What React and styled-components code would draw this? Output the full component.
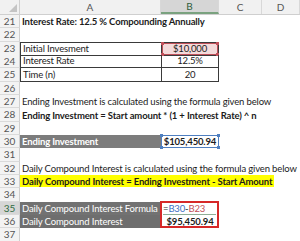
import React from "react";
import styled, { createGlobalStyle } from "styled-components";

const Global = createGlobalStyle`
  html, body { margin: 0; padding: 0; background: #fff; }
`;

const COLS = "20px 141px 58px 43px 38px";
const ROW_H = 13.33;

const Sheet = styled.div`
  width: 300px;
  height: 241px;
  overflow: hidden;
  background: #fff;
  font-family: Lato, "Liberation Sans", sans-serif;
  font-size: 9.5px;
  letter-spacing: -0.15px;
  color: #1c1c1c;
`;

const HeadRow = styled.div`
  display: grid;
  grid-template-columns: ${COLS};
  height: 15px;
  background: #f1f1f1;
  border-bottom: 1px solid #cfcfcf;
  box-sizing: border-box;
`;

const Corner = styled.div`
  position: relative;
  border-right: 1px solid #cfcfcf;
  &::after {
    content: "";
    position: absolute;
    right: 2px;
    bottom: 2px;
    border-style: solid;
    border-width: 0 0 8px 8px;
    border-color: transparent transparent #c4c4c4 transparent;
  }
`;

const ColHead = styled.div`
  display: flex;
  align-items: center;
  justify-content: center;
  color: ${(p) => (p.$active ? "#2f5d3a" : "#555")};
  background: ${(p) => (p.$active ? "#d6d6d6" : "transparent")};
  border-right: 1px solid #d8d8d8;
  border-bottom: ${(p) => (p.$active ? "2px solid #7aa27f" : "none")};
  box-sizing: border-box;
  font-size: 10px;
  letter-spacing: 0;
`;

const Row = styled.div`
  display: grid;
  grid-template-columns: ${COLS};
  height: ${ROW_H}px;
`;

const RowNum = styled.div`
  display: flex;
  align-items: center;
  justify-content: center;
  background: ${(p) => (p.$active ? "#d6d6d6" : "#f3f3f3")};
  color: ${(p) => (p.$active ? "#2f6b40" : "#555")};
  border-right: 1px solid #cfcfcf;
  border-bottom: 1px solid #dadada;
  box-sizing: border-box;
  font-size: 10px;
  letter-spacing: 0;
`;

const Cell = styled.div`
  position: relative;
  display: flex;
  align-items: flex-end;
  justify-content: ${(p) => (p.$center ? "center" : "flex-start")};
  padding: 0 2px 1px 2px;
  box-sizing: border-box;
  white-space: nowrap;
  overflow: ${(p) => (p.$clip ? "hidden" : "visible")};
  background: ${(p) => p.$fill || "transparent"};
  color: ${(p) => p.$color || "inherit"};
  font-weight: ${(p) => (p.$bold ? 700 : 400)};
  border-left: ${(p) => (p.$grid ? "1px solid #3a3a3a" : "none")};
  border-bottom: ${(p) => (p.$grid ? "1px solid #3a3a3a" : "none")};
  border-top: ${(p) => (p.$gridTop ? "1px solid #3a3a3a" : "none")};
  border-right: ${(p) => (p.$gridRight ? "1px solid #3a3a3a" : "none")};
`;

const Marked = styled.div`
  position: absolute;
  inset: 0;
  border: 1px solid ${(p) => p.$c};
  pointer-events: none;
  & > i {
    position: absolute;
    width: 3px;
    height: 3px;
    background: ${(p) => p.$c};
  }
  & > i:nth-child(1) { left: -2px; top: -2px; }
  & > i:nth-child(2) { right: -2px; top: -2px; }
  & > i:nth-child(3) { left: -2px; bottom: -2px; }
  & > i:nth-child(4) { right: -2px; bottom: -2px; }
`;

const Highlight = styled.span`
  display: inline-block;
  background: #ffff00;
  margin-left: -2px;
  padding: 1px 2px 0 2px;
  line-height: 11px;
`;

const RedBox = styled.div`
  position: absolute;
  left: -1px;
  top: -1px;
  width: 59px;
  height: ${ROW_H * 2 + 1}px;
  border: 2px solid #d62828;
  box-sizing: border-box;
  pointer-events: none;
  z-index: 2;
`;

const EditLine = styled.div`
  position: absolute;
  left: 2px;
  right: 3px;
  bottom: 0;
  height: 1px;
  background: #8fae97;
`;

const Ref = styled.span`
  color: ${(p) => p.$c};
`;

const Corners = ({ c }) => (
  <Marked $c={c}>
    <i />
    <i />
    <i />
    <i />
  </Marked>
);

const Line = ({ n, active, children }) => (
  <Row>
    <RowNum $active={active}>{n}</RowNum>
    {children}
  </Row>
);

const App = () => {
  return (
    <Sheet>
      <Global />
      <HeadRow>
        <Corner />
        <ColHead>A</ColHead>
        <ColHead $active>B</ColHead>
        <ColHead>C</ColHead>
        <ColHead>D</ColHead>
      </HeadRow>

      <Line n={21}>
        <Cell $bold>Interest Rate: 12.5 % Compounding Annually</Cell>
      </Line>
      <Line n={22} />
      <Line n={23}>
        <Cell $grid $gridTop>Initial Invesment</Cell>
        <Cell $grid $gridTop $gridRight $center $fill="#f4dada">
          $10,000
          <Corners c="#c0505a" />
        </Cell>
      </Line>
      <Line n={24}>
        <Cell $grid>Interest Rate</Cell>
        <Cell $grid $gridRight $center>12.5%</Cell>
      </Line>
      <Line n={25}>
        <Cell $grid>Time (n)</Cell>
        <Cell $grid $gridRight $center>20</Cell>
      </Line>
      <Line n={26} />
      <Line n={27}>
        <Cell>Ending Investment is calculated using the formula given below</Cell>
      </Line>
      <Line n={28}>
        <Cell $bold>Ending Investment = Start amount * (1 + Interest Rate) ^ n</Cell>
      </Line>
      <Line n={29} />
      <Line n={30}>
        <Cell $fill="#7c7c7c" $color="#fff" $bold>Ending Investment</Cell>
        <Cell $center $bold>
          $105,450.94
          <Corners c="#4f7fc0" />
        </Cell>
      </Line>
      <Line n={31} />
      <Line n={32}>
        <Cell>Daily Compound Interest is calculated using the formula given below</Cell>
      </Line>
      <Line n={33}>
        <Cell $bold>
          <Highlight>Daily Compound Interest = Ending Investment - Start Amount</Highlight>
        </Cell>
      </Line>
      <Line n={34} />
      <Line n={35} active>
        <Cell $fill="#727272" $color="#fff" $clip>Daily Compound Interest Formula</Cell>
        <Cell>
          =<Ref $c="#3f6fc4">B30</Ref>-<Ref $c="#c2505a">B23</Ref>
          <EditLine />
          <RedBox />
        </Cell>
      </Line>
      <Line n={36}>
        <Cell $fill="#6e6e6e" $color="#fff">Daily Compound Interest</Cell>
        <Cell $center $bold>$95,450.94</Cell>
      </Line>
      <Line n={37} />
    </Sheet>
  );
};

export default App;
